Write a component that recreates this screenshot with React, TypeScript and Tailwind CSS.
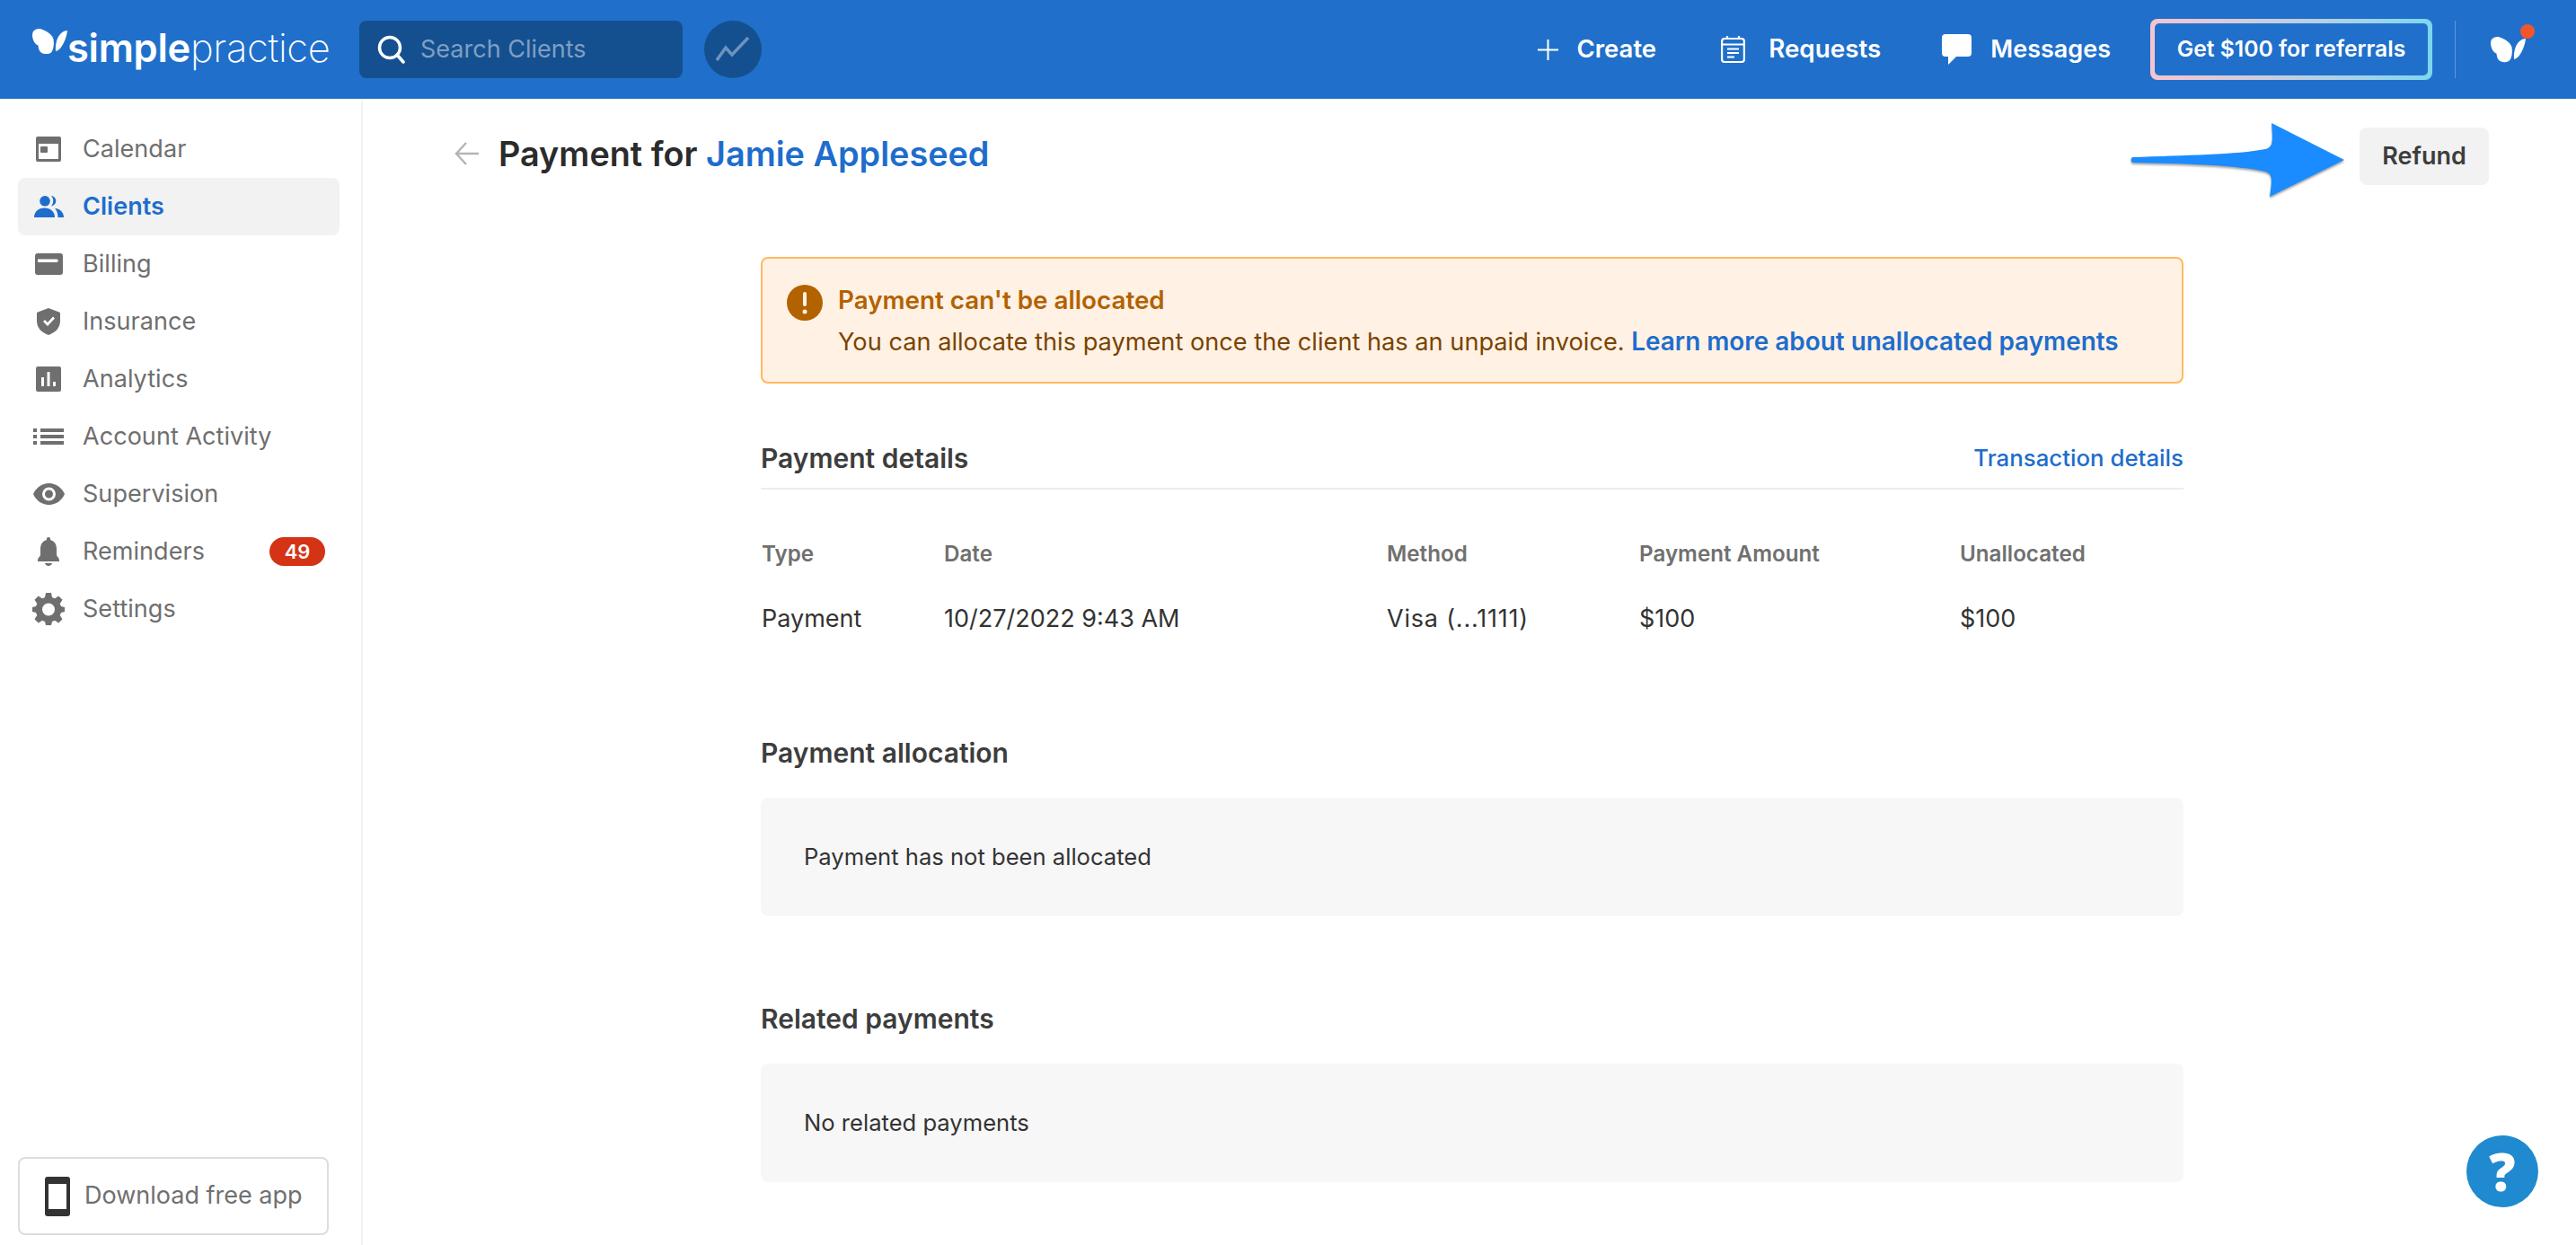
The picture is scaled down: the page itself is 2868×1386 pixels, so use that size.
const BLUE = "#2070cb";

function Butterfly({ className }: { className?: string }) {
  return (
    <svg viewBox="0 0 39 28" className={className} fill="currentColor">
      <path d="M1 3 C3 0.500 7 -0.500 10 0.500 C16 2.500 21 6 23 10 C24.500 14 24 21 22 25 C20 28.500 16 28.500 14 28 C9.500 27.500 7 25 6.500 18.500 C3 17.500 0.500 13 0 8 C0 6 0.300 4.300 1 3 Z" />
      <path d="M39 2 C35 2 31.500 5 29.500 8 C27 12 25.500 18 26 25 C30 24 33 20 35.500 14.500 C37.500 10 38.500 6 39 2 Z" />
    </svg>
  );
}

function NavRow({ label, active, badge, icon }: { label: string; active?: boolean; badge?: string; icon: React.ReactNode }) {
  return (
    <div className={`flex h-16 items-center rounded-lg pr-4 pl-4 ${active ? "bg-[#f2f2f2] font-semibold text-[#1e6dcc]" : "text-[#6f6f6f]"}`}>
      <span className="flex w-9 shrink-0 items-center justify-center">{icon}</span>
      <span className="ml-5 flex-1 pt-[1px] text-[27px] tracking-[0.05px]">{label}</span>
      {badge && (
        <span className="flex h-8 w-[62px] items-center justify-center rounded-full bg-[#d43415] text-[22px] font-semibold text-white">{badge}</span>
      )}
    </div>
  );
}

const icons = {
  calendar: (
    <svg viewBox="0 0 28 28" className="h-7 w-7 fill-current">
      <path fillRule="evenodd" d="M2 0h24a2 2 0 0 1 2 2v24a2 2 0 0 1-2 2H2a2 2 0 0 1-2-2V2a2 2 0 0 1 2-2Zm1 8v17h22V8H3Z" />
      <rect x="5" y="11" width="8" height="7" rx="1" />
    </svg>
  ),
  clients: (
    <svg viewBox="0 0 33 24" className="h-6 w-[33px] fill-current">
      <circle cx="12" cy="5.800" r="5.800" />
      <path d="M19 0.100c3 .3 5.300 2.700 5.300 5.700s-2.300 5.400-5.300 5.700c1.400-1.500 2.200-3.500 2.200-5.700S20.400 1.600 19 0.100Z" />
      <path d="M0 24c0-6 4.500-10.500 11.500-10.500S23 18 23 24H0Z" />
      <path d="M23 13.700c5.800.7 10 4.500 10 10.300h-6.500c0-4-1-7.500-3.500-10.300Z" />
    </svg>
  ),
  billing: (
    <svg viewBox="0 0 31 24" className="h-6 w-[31px] fill-current">
      <path fillRule="evenodd" d="M3 0h25a3 3 0 0 1 3 3v18a3 3 0 0 1-3 3H3a3 3 0 0 1-3-3V3a3 3 0 0 1 3-3Zm0 6.500v3.500h21a1.500 1.500 0 0 0 0-3.500H3Z" />
    </svg>
  ),
  insurance: (
    <svg viewBox="0 0 26 30" className="h-[30px] w-[26px] fill-current">
      <path fillRule="evenodd" d="M13 0l12 4.500c.7.300 1 .8 1 1.500v8c0 8-5 13-13 16C5 27 0 22 0 14V6c0-.7.300-1.200 1-1.500L13 0Zm-6 15 2-2 3 3 6-6.500 2 2-8 8.500L7 15Z" />
    </svg>
  ),
  analytics: (
    <svg viewBox="0 0 28 28" className="h-7 w-7 fill-current">
      <path fillRule="evenodd" d="M2 0h24a2 2 0 0 1 2 2v24a2 2 0 0 1-2 2H2a2 2 0 0 1-2-2V2a2 2 0 0 1 2-2Zm4 12v10h3V12H6Zm6.500-6v16h3V6h-3Zm6.500 11v5h3v-5h-3Z" />
    </svg>
  ),
  list: (
    <svg viewBox="0 0 34 18" className="h-[18px] w-[34px] fill-current">
      <path d="M0 0h4v4H0V0Zm8 0h26v4H8V0ZM0 7h4v4H0V7Zm8 0h26v4H8V7ZM0 14h4v4H0v-4Zm8 0h26v4H8v-4Z" />
    </svg>
  ),
  eye: (
    <svg viewBox="0 0 35 24" className="h-6 w-[35px] fill-current">
      <path fillRule="evenodd" d="M17.500 0C25.500 0 32 5 35 12c-3 7-9.500 12-17.500 12S3 19 0 12C3 5 9.500 0 17.500 0Zm0 4.500a7.500 7.500 0 1 0 0 15 7.500 7.500 0 0 0 0-15Zm0 3a4.500 4.500 0 1 1 0 9 4.500 4.500 0 0 1 0-9Z" />
    </svg>
  ),
  bell: (
    <svg viewBox="0 0 24 32" className="h-8 w-6 fill-current">
      <path d="M12 0a2.200 2.200 0 0 1 2.200 2.200v1C19 4.300 21 8.500 21 13v6.500c0 2 3 3.500 3 6v1.500H0v-1.500c0-2.500 3-4 3-6V13c0-4.500 2-8.700 6.800-9.800v-1A2.200 2.200 0 0 1 12 0ZM8 29h8c0 1.500-2 3-4 3s-4-1.500-4-3Z" />
    </svg>
  ),
  gear: (
    <svg viewBox="0 0 36 36" className="h-9 w-9 fill-current">
      <path fillRule="evenodd" d="M15 0h6l1 5 3 1.300 4.300-2.700 4.200 4.200L30.700 12 32 15l4 1v5l-4 1-1.300 3 2.800 4.300-4.200 4.200-4.300-2.800-3 1.300-1 4h-6l-1-4-3-1.300-4.300 2.800-4.200-4.200L5.300 25 4 22l-4-1v-5l4-1 1.300-3-2.800-4.200 4.200-4.200L11 6.300 14 5l1-5Zm3 11.500a7 7 0 1 0 0 14 7 7 0 0 0 0-14Z" />
    </svg>
  ),
};

const items: { label: string; icon: React.ReactNode; active?: boolean; badge?: string }[] = [
  { label: "Calendar", icon: icons.calendar },
  { label: "Clients", icon: icons.clients, active: true },
  { label: "Billing", icon: icons.billing },
  { label: "Insurance", icon: icons.insurance },
  { label: "Analytics", icon: icons.analytics },
  { label: "Account Activity", icon: icons.list },
  { label: "Supervision", icon: icons.eye },
  { label: "Reminders", icon: icons.bell, badge: "49" },
  { label: "Settings", icon: icons.gear },
];

function Section({ title, children }: { title: string; children: React.ReactNode }) {
  return (
    <section>
      <h2 className="h-[36px] text-[30px] leading-[36px] font-semibold text-[#3d3d3d]">{title}</h2>
      <div className="mt-[32px] flex h-[132px] items-center rounded-lg bg-[#f7f7f7] px-[48px] text-[25.6px] text-[#333]">{children}</div>
    </section>
  );
}

export default function App() {
  return (
    <div className="flex h-screen w-full flex-col overflow-hidden bg-white font-['Inter',sans-serif]">
      <header className="flex h-[110px] shrink-0 items-center pr-[56px] pl-9 text-white" style={{ backgroundColor: BLUE }}>
        <div className="flex w-[364px] shrink-0 items-start">
          <Butterfly className="mt-[3px] h-7 w-[39px] shrink-0" />
          <span className="mt-[-4px] text-[43.5px] leading-[56px] font-semibold tracking-[-0.3px]">
            simple<span className="font-extralight">practice</span>
          </span>
        </div>
        <div className="flex h-16 w-[360px] items-center rounded-lg bg-[#14508f] pl-5">
          <svg viewBox="0 0 32 32" className="h-8 w-8" fill="none" stroke="white" strokeWidth="3.500" strokeLinecap="round">
            <circle cx="14" cy="14" r="11.500" />
            <path d="M22 22l7 8" />
          </svg>
          <span className="ml-4 text-[27px] text-[#7f9fc5]">Search Clients</span>
        </div>
        <div className="ml-6 flex h-16 w-16 items-center justify-center rounded-full bg-[#14508f]">
          <svg viewBox="0 0 40 32" className="h-8 w-10" fill="none" stroke="#6f92bd" strokeWidth="3.500">
            <path d="M2 28l10-14 7 8L37 3" />
          </svg>
        </div>
        <div className="ml-auto flex items-center">
          <svg viewBox="0 0 23 23" className="h-[23px] w-[23px]" fill="none" stroke="white" strokeWidth="2">
            <path d="M11.500 0v23M0 11.500h23" />
          </svg>
          <span className="ml-[21px] text-[27.5px] font-semibold">Create</span>
          <svg viewBox="0 0 27 30" className="ml-[72px] h-[30px] w-[27px]" fill="none" stroke="white" strokeWidth="2.200">
            <rect x="1.100" y="3" width="24.800" height="26" rx="3" />
            <path d="M1 9.500h25M7 0v4M20 0v4M7 14.500h13M7 19h13M7 23.500h8" />
          </svg>
          <span className="ml-[26px] text-[27.8px] font-semibold">Requests</span>
          <svg viewBox="0 0 33 34" className="ml-[68px] h-[34px] w-[33px]" fill="white">
            <path d="M4 0h25a4 4 0 0 1 4 4v17a4 4 0 0 1-4 4H16L7 34v-9H4a4 4 0 0 1-4-4V4a4 4 0 0 1 4-4Z" />
          </svg>
          <span className="ml-[21px] text-[27px] font-semibold">Messages</span>
          <div className="ml-[44px] rounded-lg bg-gradient-to-r from-[#f6c5cf] to-[#7dd6ef] p-[5px]">
            <div className="flex h-[58px] w-[304px] items-center justify-center rounded-[5px] text-[24.7px] font-semibold" style={{ backgroundColor: BLUE }}>
              Get $100 for referrals
            </div>
          </div>
          <div className="ml-[25px] h-16 w-px bg-[#5f98da]" />
          <div className="relative ml-[39px] h-[30px] w-[39px]">
            <Butterfly className="h-[30px] w-[39px]" />
            <span className="absolute -top-[13px] right-[-10px] h-4 w-4 rounded-full bg-[#f2552c]" />
          </div>
        </div>
      </header>

      <div className="flex min-h-0 flex-1">
        <aside className="flex w-[404px] shrink-0 flex-col justify-between border-r-2 border-[#f2f2f2] pt-6 pr-6 pb-[11px] pl-5">
          <nav>
            {items.map((it) => (
              <NavRow key={it.label} {...it} />
            ))}
          </nav>
          <div className="flex h-[87px] w-[346px] items-center rounded-lg border-2 border-[#dddddd] pl-7 text-[27px] text-[#707070]">
            <svg viewBox="0 0 28 44" className="h-11 w-7 shrink-0" fill="#333">
              <path fillRule="evenodd" d="M3 0h22a3 3 0 0 1 3 3v38a3 3 0 0 1-3 3H3a3 3 0 0 1-3-3V3a3 3 0 0 1 3-3Zm1 8v28h20V8H4Z" />
            </svg>
            <span className="ml-[16px]">Download free app</span>
          </div>
        </aside>

        <main className="relative min-w-0 flex-1">
          <div className="flex items-start pt-8 pr-[97px] pl-[102px]">
            <svg viewBox="0 0 28 28" className="mt-[15px] h-7 w-7 shrink-0" fill="none" stroke="#b5b5b5" strokeWidth="2.500">
              <path d="M27 14H2M13 2 2 14l11 12" />
            </svg>
            <h1 className="ml-[21px] text-[37.8px] leading-[58px] font-semibold text-[#2b2b2b]">
              Payment for <span className="text-[#1e6dcc]">Jamie Appleseed</span>
            </h1>
            <div className="ml-auto flex items-start">
              <svg viewBox="0 0 240 84" className="mt-[-6px] mr-[15px] h-[84px] w-[240px]" style={{ filter: "drop-shadow(0 2px 1px rgba(0,0,0,0.35))" }} fill="#1a8cff">
                <path d="M2 39 C60 37 120 36 150 30 C158 28 159 24 157 1 L238 42 L155 83 C158 62 158 58 150 55 C120 48 60 46 2 45 C0 43 0 41 2 39 Z" />
              </svg>
              <button className="h-16 w-36 rounded-lg bg-[#f2f2f2] pt-[1px] text-[27px] font-semibold text-[#3d3d3d]">Refund</button>
            </div>
          </div>

          <div className="mt-[66px] ml-[443px] flex w-[1584px] flex-col">
            <div className="flex h-[141px] rounded-lg border-2 border-[#ffb95f] bg-[#fff2e5] pl-[27px]">
              <svg viewBox="0 0 40 40" className="mt-[29px] h-10 w-10 shrink-0">
                <circle cx="20" cy="20" r="20" fill="#b36200" />
                <rect x="18" y="8" width="4" height="16" rx="2" fill="#fff2e5" />
                <circle cx="20" cy="30" r="2.500" fill="#fff2e5" />
              </svg>
              <div className="ml-[17px] pt-[28px]">
                <div className="text-[27.8px] leading-[36px] font-semibold text-[#b36200]">Payment can't be allocated</div>
                <div className="mt-[10px] text-[27.2px] leading-[36px] text-[#7a4300]">
                  You can allocate this payment once the client has an unpaid invoice.{" "}
                  <span className="text-[27.9px] font-semibold text-[#1e6dcc]">Learn more about unallocated payments</span>
                </div>
              </div>
            </div>

            <div className="mt-[65px] flex h-[53px] items-start justify-between border-b-2 border-[#ededed]">
              <h2 className="text-[30px] leading-[36px] font-semibold text-[#3d3d3d]">Payment details</h2>
              <span className="text-[25.8px] leading-[36px] font-medium text-[#1e6dcc]">Transaction details</span>
            </div>

            <div className="mt-[54px] grid grid-cols-[203px_493px_281px_357px_1fr] pl-[1px] text-[25px] leading-[36px]">
              {["Type", "Date", "Method", "Payment Amount", "Unallocated"].map((h) => (
                <div key={h} className="text-[24.2px] font-semibold text-[#707070]">{h}</div>
              ))}
              {["Payment", "10/27/2022 9:43 AM", "Visa (...1111)", "$100", "$100"].map((v, i) => (
                <div key={i} className={`mt-[36px] text-[27px] text-[#333] ${i === 2 ? "tracking-[0.8px]" : ""}`}>{v}</div>
              ))}
            </div>

            <div className="mt-[113px] flex flex-col gap-[96px]">
              <Section title="Payment allocation">Payment has not been allocated</Section>
              <Section title="Related payments">No related payments</Section>
            </div>
          </div>

          <div className="absolute right-[42px] bottom-[42px] flex h-20 w-20 items-center justify-center rounded-full bg-[#1f8acf] font-['Open_Sans',sans-serif] text-[58px] leading-none font-extrabold text-white">?</div>
        </main>
      </div>
    </div>
  );
}
